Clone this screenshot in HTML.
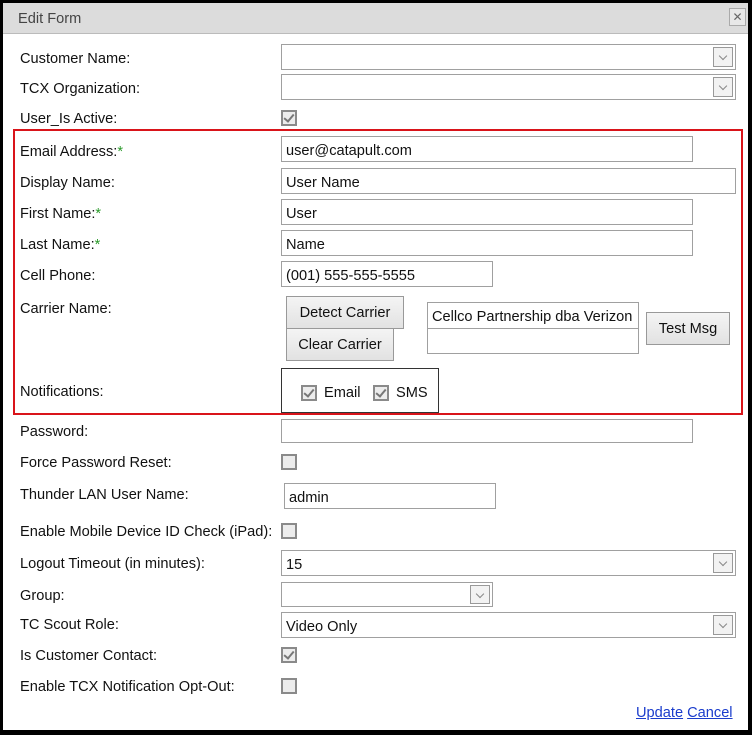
<!DOCTYPE html>
<html><head><style>
*{box-sizing:border-box;margin:0;padding:0}
body{width:752px;height:735px;background:#000;position:relative;overflow:hidden;font-family:"Liberation Sans",sans-serif;font-size:14.6px;color:#111}
.p{position:absolute;background:#fff;left:3px;top:3px;width:745px;height:727px}
.t{position:absolute;left:0;top:0;width:745px;height:31px;background:#dcdcdc;border-bottom:1px solid #bbb;color:#444;font-size:14.6px;padding:8px 0 0 15px}
.x{position:absolute;right:2px;top:5px;width:17px;height:18px;border:1px solid #aaa;background:#e8e8e8;font-size:12px;line-height:16px;text-align:center;color:#666}
.a{position:absolute}
.l{position:absolute;left:17px;margin-top:2px}
.s{color:#2a9a2a}
.i{position:absolute;border:1px solid #a0a0a0;background:#fff;padding:4px 4px 0;line-height:20px}
.d{position:absolute;right:2px;top:2px;bottom:2px;width:20px;border:1px solid #999;background:#f2f2f2}
.d:after{content:"";position:absolute;left:6px;top:5px;width:5px;height:5px;border-right:1px solid #888;border-bottom:1px solid #888;transform:rotate(45deg)}
.c{position:absolute;width:16px;height:16px;border:2px solid #8a8a8a;background:#ececec}
.k:after{content:"";position:absolute;left:3px;top:0px;width:4px;height:8px;border-right:2px solid #777;border-bottom:2px solid #777;transform:rotate(40deg)}
.b{position:absolute;border:1px solid #999;background:linear-gradient(#f4f4f4,#e2e2e2);text-align:center}
a{color:#1a3ccc;text-decoration:underline}
</style></head><body><div class="p">
<div class="t">Edit Form<div class="x">✕</div></div>
<div class="l" style="top:46px">Customer Name:</div>
<div class="i" style="left:278px;top:41px;width:455px;height:26px"><div class="d"></div></div>
<div class="l" style="top:76px">TCX Organization:</div>
<div class="i" style="left:278px;top:71px;width:455px;height:26px"><div class="d"></div></div>
<div class="l" style="top:106px">User_Is Active:</div>
<div class="c k" style="left:278px;top:107px"></div>
<div class="a" style="left:10px;top:126px;width:730px;height:286px;border:2px solid #d9141a"></div>
<div class="l" style="top:139px">Email Address:<span class="s">*</span></div>
<div class="i" style="left:278px;top:133px;width:412px;height:26px">user@catapult.com</div>
<div class="l" style="top:170px">Display Name:</div>
<div class="i" style="left:278px;top:165px;width:455px;height:26px">User Name</div>
<div class="l" style="top:201px">First Name:<span class="s">*</span></div>
<div class="i" style="left:278px;top:196px;width:412px;height:26px">User</div>
<div class="l" style="top:232px">Last Name:<span class="s">*</span></div>
<div class="i" style="left:278px;top:227px;width:412px;height:26px">Name</div>
<div class="l" style="top:263px">Cell Phone:</div>
<div class="i" style="left:278px;top:258px;width:212px;height:26px">(001) 555-555-5555</div>
<div class="l" style="top:296px">Carrier Name:</div>
<div class="b" style="left:283px;top:293px;width:118px;height:33px;line-height:33px">Detect Carrier</div>
<div class="b" style="left:283px;top:325px;width:108px;height:33px;line-height:33px">Clear Carrier</div>
<div class="i" style="left:424px;top:299px;width:212px;height:27px">Cellco Partnership dba Verizon</div>
<div class="i" style="left:424px;top:325px;width:212px;height:26px"></div>
<div class="b" style="left:643px;top:309px;width:84px;height:33px;line-height:33px">Test Msg</div>
<div class="l" style="top:379px">Notifications:</div>
<div class="a" style="left:278px;top:365px;width:158px;height:45px;border:1px solid #333"></div>
<div class="c k" style="left:298px;top:382px"></div>
<div class="a" style="left:321px;top:382px">Email</div>
<div class="c k" style="left:370px;top:382px"></div>
<div class="a" style="left:393px;top:382px">SMS</div>
<div class="l" style="top:419px">Password:</div>
<div class="i" style="left:278px;top:416px;width:412px;height:24px"></div>
<div class="l" style="top:450px">Force Password Reset:</div>
<div class="c" style="left:278px;top:451px"></div>
<div class="l" style="top:482px">Thunder LAN User Name:</div>
<div class="i" style="left:281px;top:480px;width:212px;height:26px">admin</div>
<div class="l" style="top:519px">Enable Mobile Device ID Check (iPad):</div>
<div class="c" style="left:278px;top:520px"></div>
<div class="l" style="top:551px">Logout Timeout (in minutes):</div>
<div class="i" style="left:278px;top:547px;width:455px;height:26px">15<div class="d"></div></div>
<div class="l" style="top:583px">Group:</div>
<div class="i" style="left:278px;top:579px;width:212px;height:25px"><div class="d"></div></div>
<div class="l" style="top:612px">TC Scout Role:</div>
<div class="i" style="left:278px;top:609px;width:455px;height:26px">Video Only<div class="d"></div></div>
<div class="l" style="top:643px">Is Customer Contact:</div>
<div class="c k" style="left:278px;top:644px"></div>
<div class="l" style="top:674px">Enable TCX Notification Opt-Out:</div>
<div class="c" style="left:278px;top:675px"></div>
<div class="a" style="left:633px;top:702px"><a>Update</a> <a>Cancel</a></div>
</div></body></html>
